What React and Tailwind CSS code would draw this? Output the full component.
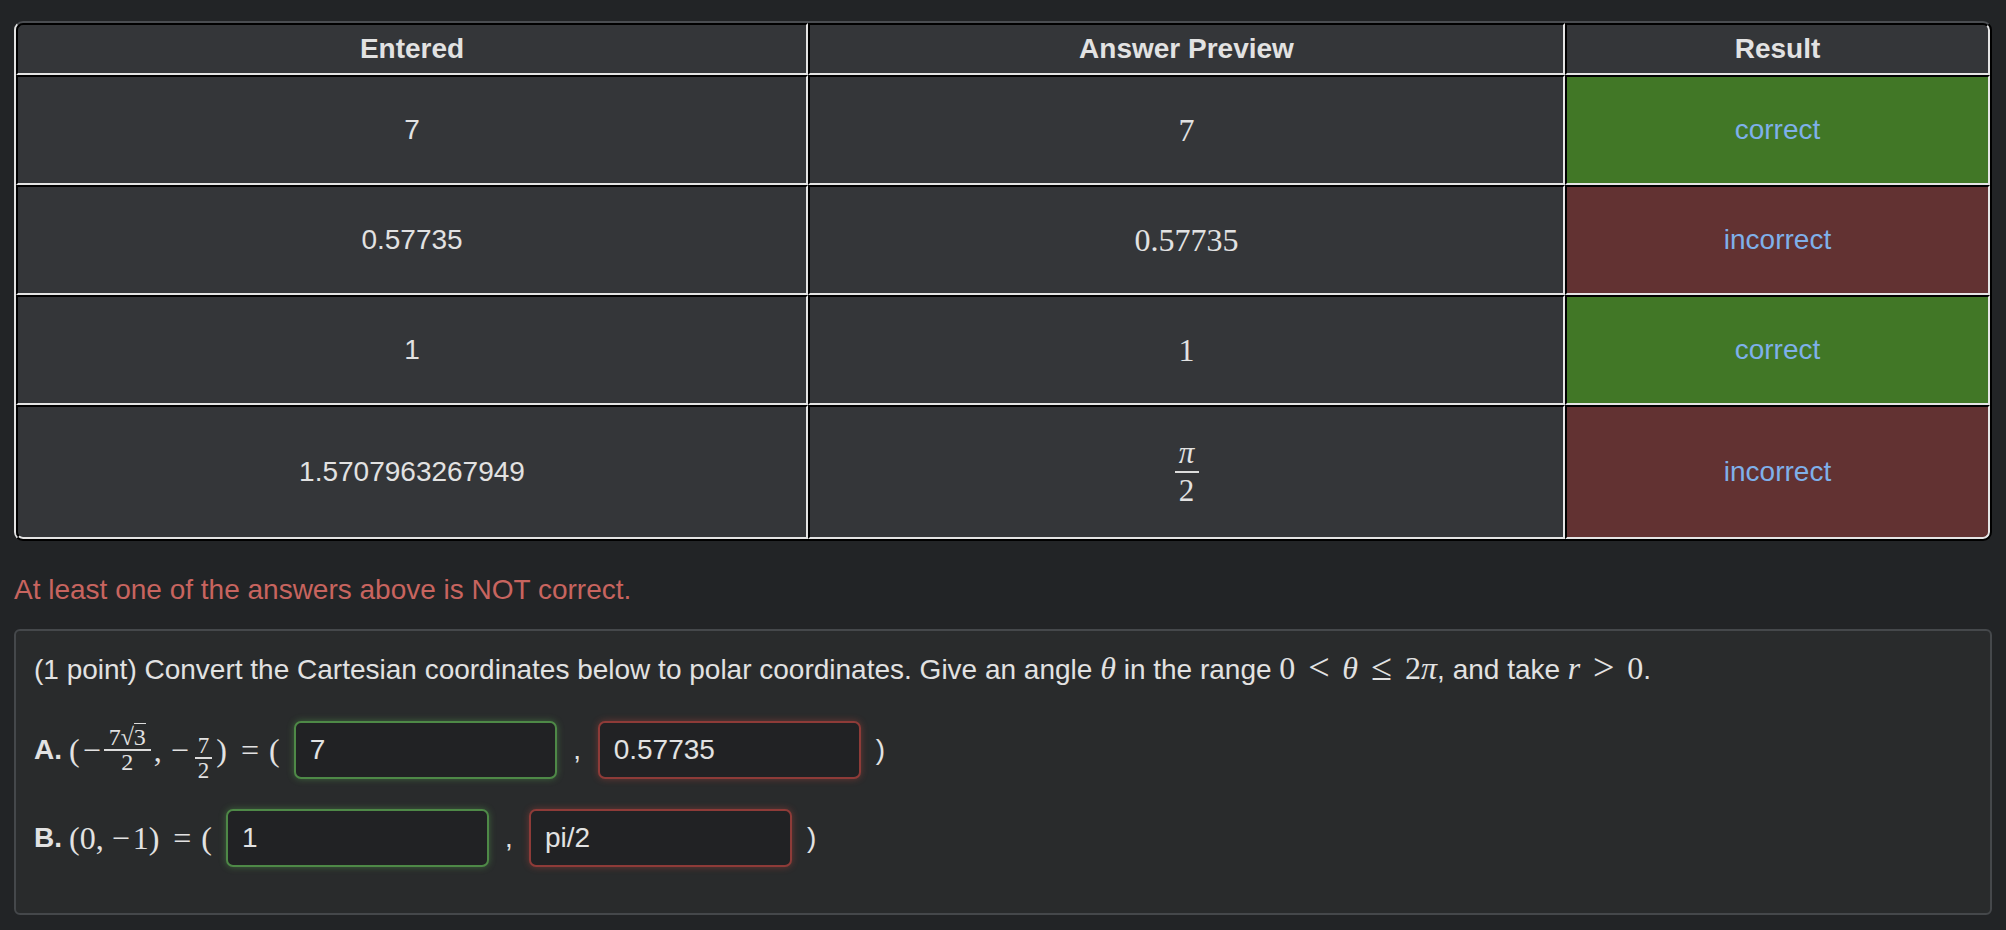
import React from "react";

const sans = "font-['Liberation_Sans','Helvetica','Arial',sans-serif]";
const serif = "font-['Liberation_Serif','Times_New_Roman',serif]";

function Cell({ children, className = "", corner = "" }) {
  return (
    <div
      className={`flex items-center justify-center border-2 border-t-black border-l-black border-b-[#e4e4e4] border-r-[#e4e4e4] ${corner} ${className}`}
    >
      {children}
    </div>
  );
}

function Frac({ num, den, size = "text-[24px]", pad = "px-[3px]" }) {
  return (
    <span className={`inline-flex flex-col items-center ${serif}`}>
      <span className={`${size} leading-[23px] ${pad}`}>{num}</span>
      <span className="h-[2px] bg-[#dcdcdc] self-stretch"></span>
      <span className={`${size} leading-[23px]`}>{den}</span>
    </span>
  );
}

function Rel({ children }) {
  return (
    <span className="inline-block w-[27px] text-center mx-[10px] text-[38px] leading-[0] relative top-[1px]">
      {children}
    </span>
  );
}

function Minus({ className = "" }) {
  return <span className={`inline-block w-[24px] text-center ${className}`}>−</span>;
}

function Input({ value, ok }) {
  const c = ok
    ? "border-[#4e8947] shadow-[0_0_7px_rgba(90,170,80,0.45)]"
    : "border-[#8e3b38] shadow-[0_0_7px_rgba(190,70,60,0.45)]";
  return (
    <div
      className={`w-[263px] h-[58px] rounded-[7px] border-2 bg-[#212224] flex items-center pl-[14px] text-[28px] text-[#e2e2e2] ${c}`}
    >
      {value}
    </div>
  );
}

export default function App() {
  const rows = [
    { e: "7", p: <span className={`${serif} text-[32px]`}>7</span>, ok: true },
    { e: "0.57735", p: <span className={`${serif} text-[32px]`}>0.57735</span>, ok: false },
    { e: "1", p: <span className={`${serif} text-[32px]`}>1</span>, ok: true },
    {
      e: "1.5707963267949",
      p: (
        <span className={`inline-flex flex-col items-center ${serif}`}>
          <span className="text-[31px] italic leading-[30px]">π</span>
          <span className="h-[2px] w-[24px] bg-[#dcdcdc] my-[3px]"></span>
          <span className="text-[31px] leading-[30px]">2</span>
        </span>
      ),
      ok: false,
    },
  ];

  return (
    <div className={`min-h-[930px] w-full bg-[#222426] text-[#e2e2e2] ${sans} pt-[21px] pb-[17px]`}>
      {/* Results table */}
      <div className="ml-[14px] w-[1978px] rounded-[9px] border-2 border-t-[#4a4d51] border-l-[#e2e2e2] border-r-black border-b-black overflow-hidden">
        <div className="grid grid-cols-[792px_757px_425px] grid-rows-[52px_110px_110px_110px_134px] bg-[#2a2c2e]">
          <Cell className="bg-[#343639] font-bold text-[28px]" corner="rounded-tl-[7px]">Entered</Cell>
          <Cell className="bg-[#343639] font-bold text-[28px]">Answer Preview</Cell>
          <Cell className="bg-[#343639] font-bold text-[28px]" corner="rounded-tr-[7px]">Result</Cell>
          {rows.map((r, i) => (
            <React.Fragment key={i}>
              <Cell
                className="bg-[#343639] text-[28px]"
                corner={i === 3 ? "rounded-bl-[7px]" : ""}
              >
                {r.e}
              </Cell>
              <Cell className="bg-[#343639]">{r.p}</Cell>
              <Cell
                className={`text-[28px] text-[#7fb0ea] ${r.ok ? "bg-[#417726]" : "bg-[#623232]"}`}
                corner={i === 3 ? "rounded-br-[7px]" : ""}
              >
                {r.ok ? "correct" : "incorrect"}
              </Cell>
            </React.Fragment>
          ))}
        </div>
      </div>

      <p className="ml-[14px] mt-[29px] text-[28px] leading-[40px] text-[#c8645f]">
        At least one of the answers above is NOT correct.
      </p>

      {/* Problem box */}
      <div className="ml-[14px] mt-[19px] w-[1978px] rounded-[6px] border-2 border-[#45484b] bg-[#292b2c] pl-[18px] pt-[17px] pb-[46px]">
        <p className="text-[28px] leading-[40px] text-[#e2e2e2]">
          (1 point) Convert the Cartesian coordinates below to polar coordinates. Give an angle{" "}
          <span className={`${serif} italic text-[32px]`}>θ</span> in the range{" "}
          <span className={`${serif} text-[32px]`}>
            0<Rel>&lt;</Rel>
            <span className="italic">θ</span>
            <Rel>≤</Rel>2<span className="italic">π</span>
          </span>
          , and take <span className={`${serif} italic text-[32px]`}>r</span>
          <span className={`${serif} text-[32px]`}>
            <Rel>&gt;</Rel>0
          </span>
          .
        </p>

        {/* A */}
        <div className="mt-[31px] flex items-center h-[58px] text-[28px]">
          <span className="font-bold">A.</span>
          <span className={`ml-[7px] flex items-center ${serif} text-[32px]`}>
            <span>(</span>
            <Minus />
            <Frac
              pad="px-[5px]"
              num={
                <span>
                  7√<span className="border-t-[1.5px] border-[#dcdcdc]">3</span>
                </span>
              }
              den="2"
            />
            <span className="ml-[3px]">,</span>
            <Minus className="ml-[6px]" />
            <span className="ml-[3px]">
              <Frac num="7" den="2" size="text-[23px]" />
            </span>
            <span className="ml-[4px]">)</span>
            <span className="ml-[10px] inline-block w-[26px] text-center">=</span>
            <span className="ml-[6px]">(</span>
          </span>
          <span className="ml-[14px]">
            <Input value="7" ok />
          </span>
          <span className="w-[41px] text-center">,</span>
          <Input value="0.57735" ok={false} />
          <span className="ml-[15px]">)</span>
        </div>

        {/* B */}
        <div className="mt-[30px] flex items-center h-[58px] text-[28px]">
          <span className="font-bold">B.</span>
          <span className={`ml-[7px] flex items-center ${serif} text-[32px]`}>
            <span>(0,</span>
            <Minus className="ml-[5px]" />
            <span>1)</span>
            <span className="ml-[10px] inline-block w-[26px] text-center">=</span>
            <span className="ml-[6px]">(</span>
          </span>
          <span className="ml-[14px]">
            <Input value="1" ok />
          </span>
          <span className="w-[40px] text-center">,</span>
          <Input value="pi/2" ok={false} />
          <span className="ml-[15px]">)</span>
        </div>
      </div>
    </div>
  );
}
